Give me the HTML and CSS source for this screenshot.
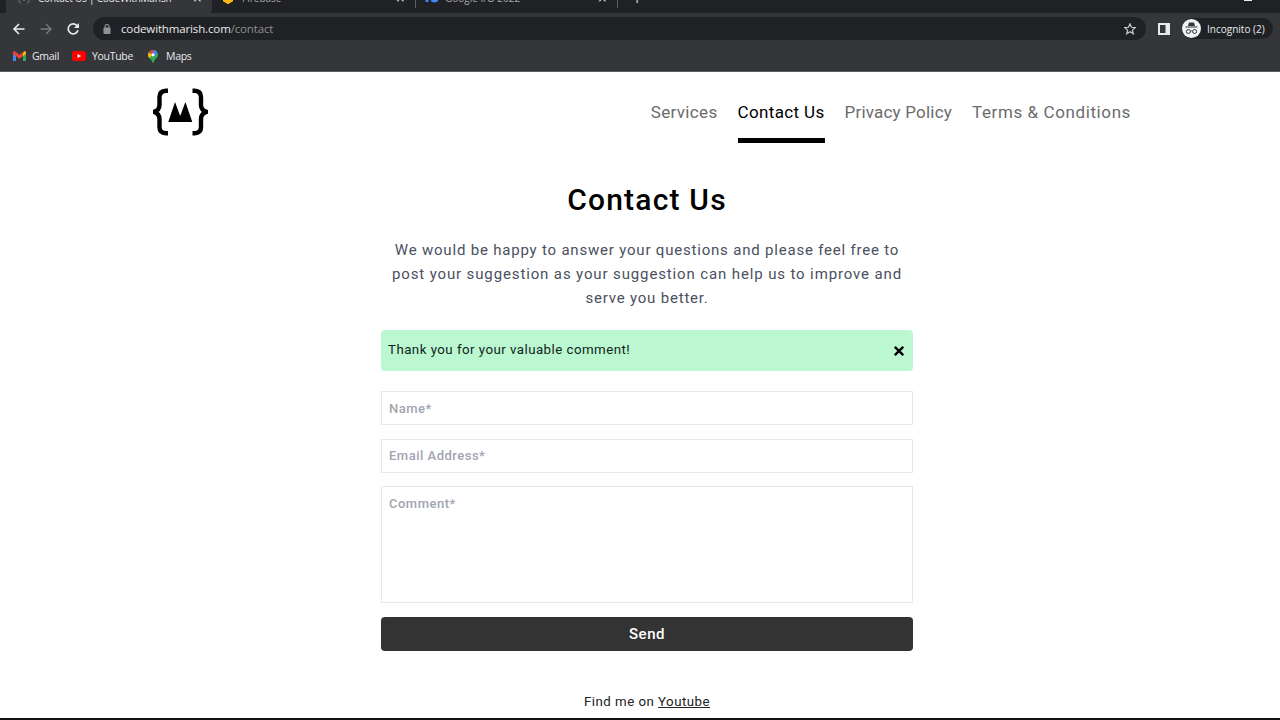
FILE: index.html
```html
<!DOCTYPE html>
<html lang="en">

<head>
    <meta charset="UTF-8">
    <meta name="viewport" content="width=device-width, initial-scale=1.0">
    <title>Contact Us | CodeWithMarish</title>
    <link rel="stylesheet" href="styles.css">
</head>

<body>
    <div class="browser">
        <!-- tabs -->
        <div class="tabs">
            <div class="tab active">
                <svg class="tab-icon" width="12" height="12" viewBox="0 0 12 12" fill="none" stroke="#77797d">
                    <path d="M3 1Q1 1 1 3V5L0 6L1 7V9Q1 11 3 11M9 1Q11 1 11 3V5L12 6L11 7V9Q11 11 9 11M4 8H8" />
                </svg>
                <span class="tab-title">Contact Us | CodeWithMarish</span>
                <span class="tab-close">×</span>
            </div>
            <div class="tab firebase">
                <svg class="tab-icon" width="12" height="12" viewBox="0 0 12 12">
                    <path d="M1 1H11V9L6 12L1 9Z" fill="#ffca28" />
                    <path d="M1 9L6 5L11 9L6 12Z" fill="#ffb612" />
                </svg>
                <span class="tab-title">Firebase</span>
                <span class="tab-close">×</span>
            </div>
            <div class="tab google">
                <svg class="tab-icon" width="15" height="12" viewBox="0 0 15 12" fill="none" stroke="#4285f4" stroke-width="3">
                    <path d="M3 2V10" />
                    <circle cx="10.500" cy="6.500" r="2.500" />
                </svg>
                <span class="tab-title">Google I/O 2022</span>
                <span class="tab-close">×</span>
            </div>
            <span class="new-tab">+</span>
            <span class="minimize"></span>
        </div>

        <!-- address bar -->
        <div class="toolbar">
            <svg class="nav-icon" width="14" height="14" viewBox="0 0 14 14" fill="none" stroke="#e8eaed" stroke-width="1.600">
                <path d="M12.500 7H2M7 2L2 7L7 12" />
            </svg>
            <svg class="nav-icon" width="14" height="14" viewBox="0 0 14 14" fill="none" stroke="#77797d" stroke-width="1.400">
                <path d="M1.500 7H12M7 2L12 7L7 12" />
            </svg>
            <svg class="nav-icon" width="14" height="14" viewBox="0 0 14 14" fill="none" stroke="#e8eaed" stroke-width="1.700">
                <path d="M11.300 4A5 5 0 1 0 12 8.300" />
                <path d="M13 1V6H8Z" fill="#e8eaed" stroke="none" />
            </svg>
            <div class="address">
                <svg width="8" height="10" viewBox="0 0 8 10">
                    <path d="M2 4V2.500A2 2 0 0 1 6 2.500V4" fill="none" stroke="#8f9194" stroke-width="1.100" />
                    <rect x="0.500" y="3.500" width="7" height="6.500" rx="0.800" fill="#8f9194" />
                </svg>
                <span class="url">codewithmarish.com<span>/contact</span></span>
                <svg class="star" width="12" height="12" viewBox="0 0 12 12" fill="none" stroke="#c8cacd" stroke-width="1.200">
                    <path d="M6 0.900L7.500 4.300L11.300 4.600L8.400 7.100L9.300 10.800L6 8.800L2.700 10.800L3.600 7.100L0.700 4.600L4.500 4.300Z" />
                </svg>
            </div>
            <svg class="panel-icon" width="12" height="12" viewBox="0 0 12 12">
                <path d="M0 0H12V12H0ZM2 2V10H7.500V2Z" fill="#e8eaed" fill-rule="evenodd" />
            </svg>
            <div class="incognito">
                <svg width="19" height="19" viewBox="0 0 19 19">
                    <circle cx="9.500" cy="9.500" r="9.500" fill="#f1f3f4" />
                    <path d="M6 7L7 3.500H12L13 7ZM3.500 7.500H15.500V8.500H3.500Z" fill="#35363a" />
                    <g fill="none" stroke="#35363a">
                        <circle cx="6.400" cy="12.500" r="2" />
                        <circle cx="12.600" cy="12.500" r="2" />
                        <path d="M8.400 12.300Q9.500 11.300 10.600 12.300" />
                    </g>
                </svg>
                <span>Incognito (2)</span>
            </div>
        </div>

        <!-- bookmarks -->
        <div class="bookmarks">
            <span class="bookmark gmail">
                <svg width="13" height="10" viewBox="0 0 13 10">
                    <path d="M0 2V10H3V4Z" fill="#4285f4" />
                    <path d="M10 4V10H13V2Z" fill="#34a853" />
                    <path d="M10 1.500L11.500 0L13 1V3L10 5Z" fill="#fbbc04" />
                    <path d="M0 3V1L1.500 0L6.500 3.800L10 1.200V5L6.500 7.700Z" fill="#ea4335" />
                </svg>
                Gmail
            </span>
            <span class="bookmark youtube">
                <svg width="14" height="10" viewBox="0 0 14 10">
                    <rect width="14" height="10" rx="2.500" fill="#f00" />
                    <path d="M5.500 3L9.300 5L5.500 7Z" fill="#fff" />
                </svg>
                YouTube
            </span>
            <span class="bookmark maps">
                <svg width="10" height="13" viewBox="0 0 10 13">
                    <path d="M5 0A5 5 0 0 1 10 5C10 8 6.500 9 5.800 12Q5 14 4.200 12C3.500 9 0 8 0 5A5 5 0 0 1 5 0Z" fill="#34a853" />
                    <path d="M1 2.200L4 5L1.300 8.300Q0 6.800 0 5Q0 3.300 1 2.200Z" fill="#fbbc04" />
                    <path d="M1 2.200Q2.500 0 5 0L6.500 0.300L3.500 4.500Z" fill="#ea4335" />
                    <path d="M6 0.100Q8.600 0.600 9.600 3L6.500 6.300L4 4Z" fill="#4285f4" />
                    <circle cx="5" cy="4.800" r="1.600" fill="#fff" />
                </svg>
                Maps
            </span>
        </div>
    </div>

    <div class="page">
        <header class="header">
            <a class="logo" href="#">
                <svg width="55" height="48" viewBox="0 0 55 48">
                    <g fill="none" stroke="#000" stroke-width="4.400">
                        <path d="M15 2.700H13Q6.500 3 6.500 9V17Q6.500 22 1 23.800Q6.500 25.500 6.500 31V39Q6.500 45 13 45.200H15" />
                        <path d="M39.500 2.700H41.500Q48 3 48 9V17Q48 22 53.500 23.800Q48 25.500 48 31V39Q48 45 41.500 45.200H39.500" />
                    </g>
                    <path d="M15.300 34L22 14L27.200 28L32.400 14L39.300 34Z" fill="#000" />
                </svg>
            </a>
            <nav class="menu">
                <a href="#">Services</a>
                <a class="current" href="#">Contact Us</a>
                <a class="privacy" href="#">Privacy Policy</a>
                <a class="terms" href="#">Terms &amp; Conditions</a>
            </nav>
        </header>

        <main class="contact">
            <h1>Contact Us</h1>
            <p class="intro">We would be happy to answer your questions and please feel free to<br>
                <span class="intro-mid">post your suggestion as your suggestion can help us to improve and</span><br>
                serve you better.</p>
            <div class="alert">
                <span>Thank you for your valuable comment!</span>
                <svg width="10" height="10" viewBox="0 0 10 10" stroke="#000" stroke-width="2.300">
                    <path d="M0.800 0.800L9.200 9.200M9.200 0.800L0.800 9.200" />
                </svg>
            </div>
            <form class="form">
                <input type="text" placeholder="Name*">
                <input type="email" placeholder="Email Address*">
                <textarea placeholder="Comment*"></textarea>
                <button type="button">Send</button>
            </form>
            <p class="find">Find me on <a href="#">Youtube</a></p>
        </main>
    </div>
</body>

</html>
```

FILE: styles.css
```css
* {
    box-sizing: border-box;
}

body {
    margin: 0;
    height: 720px;
    overflow: hidden;
    display: flex;
    flex-direction: column;
    background-color: #fff;
    font-family: Roboto, sans-serif;
}

a {
    color: inherit;
    text-decoration: none;
}

svg {
    display: block;
    flex-shrink: 0;
}

/* browser */
.browser {
    height: 72px;
    flex-shrink: 0;
    background-color: #35363a;
    border-bottom: 1px solid #5c5d60;
    font-family: "Open Sans", sans-serif;
    color: #e8eaed;
}

.tabs {
    display: flex;
    height: 13px;
    padding-left: 6px;
    background-color: #202124;
}

.tab {
    display: flex;
    height: 8px;
    padding-right: 10px;
    font-size: 10px;
    line-height: 14px;
    color: #a5a8ac;
}

.tab.active {
    width: 206px;
    height: 13px;
    padding-left: 12px;
    border-radius: 0 0 4px 0;
    background-color: #35363a;
    color: #e8eaed;
}

.active .tab-title {
    letter-spacing: -0.2px;
}

.firebase {
    width: 204px;
    padding-left: 10px;
    border-right: 1px solid #5f6165;
}

.google {
    width: 202px;
    padding-left: 8px;
    border-right: 1px solid #5f6165;
}

.tab-icon {
    margin-top: -8px;
    margin-right: 8px;
}

.google .tab-icon {
    margin-right: 6px;
}

.tab-title {
    margin-top: -9px;
    white-space: nowrap;
}

.tab-close {
    margin-top: -9px;
    margin-left: auto;
    font-size: 16px;
    color: #d5d7da;
}

.new-tab {
    margin: -11px 0 0 14px;
    font-size: 18px;
    line-height: 18px;
    color: #c8cacd;
}

.minimize {
    width: 8px;
    height: 1px;
    margin-left: auto;
    margin-right: 28px;
    background-color: #e8eaed;
}

.toolbar {
    display: flex;
    align-items: center;
    height: 31px;
    padding: 0 7px 0 12px;
}

.nav-icon {
    margin-right: 13px;
}

.address {
    display: flex;
    align-items: center;
    flex: 1;
    height: 23px;
    padding: 0 10px 0 10px;
    border-radius: 12px;
    background-color: #202124;
}

.url {
    margin-left: 10px;
    font-size: 11.5px;
    letter-spacing: -0.14px;
}

.url span {
    color: #8c8f93;
}

.star {
    margin-left: auto;
}

.panel-icon {
    margin: 0 12px;
}

.incognito {
    display: flex;
    align-items: center;
    gap: 6px;
    width: 91px;
    height: 21px;
    border-radius: 11px;
    background-color: #202124;
    font-size: 10px;
    white-space: nowrap;
}

.bookmarks {
    display: flex;
    align-items: center;
    height: 24px;
    padding-left: 13px;
    font-size: 10.5px;
    letter-spacing: -0.3px;
}

.bookmark {
    display: flex;
    align-items: center;
    gap: 6px;
}

.gmail {
    width: 59px;
}

.youtube {
    width: 76px;
}

.maps {
    gap: 8px;
}

/* page */
.page {
    flex: 1;
    border-bottom: 2px solid #111;
}

.header {
    display: flex;
    justify-content: space-between;
    height: 72px;
    padding: 16px 149px 0 153px;
}

.menu {
    display: flex;
    gap: 20px;
    height: 55px;
    font-size: 17px;
    line-height: 48px;
    letter-spacing: 0.35px;
    color: #6b6b6b;
}

.menu a {
    white-space: nowrap;
}

.menu .current {
    color: #000;
    border-bottom: 5px solid #000;
}

.menu .privacy {
    letter-spacing: 0.2px;
}

.menu .terms {
    letter-spacing: 0.6px;
}

.contact {
    width: 532px;
    margin: 0 auto;
    position: relative;
    left: 7px;
    text-align: center;
}

.contact h1 {
    margin: 37px 0 0;
    font-size: 30px;
    font-weight: 500;
    line-height: 38px;
    letter-spacing: 1.2px;
}

.intro {
    margin: 19px 0 20px;
    font-size: 15px;
    line-height: 24px;
    letter-spacing: 0.8px;
    color: #4a5060;
    white-space: nowrap;
}

.intro-mid {
    letter-spacing: 0.87px;
}

.alert {
    display: flex;
    align-items: center;
    justify-content: space-between;
    height: 41px;
    padding: 0 9px 0 7px;
    border-radius: 4px;
    background-color: #bbf7d0;
    font-size: 13.3px;
    letter-spacing: 0.46px;
    color: #10251a;
}

.alert span {
    padding-bottom: 2px;
}

.form {
    display: flex;
    flex-direction: column;
    gap: 13.7px;
    margin-top: 20px;
}

.form input,
.form textarea {
    height: 34px;
    margin: 0;
    padding: 0 7px;
    border: 1px solid #e8e8ea;
    font: 500 13px Roboto, sans-serif;
    letter-spacing: 0.5px;
    resize: none;
}

.form textarea {
    height: 117px;
    padding-top: 9px;
}

.form ::placeholder {
    color: #a0a5b0;
}

.form button {
    height: 34px;
    border: none;
    border-radius: 4px;
    background-color: #333;
    color: #fff;
    font: 500 15px Roboto, sans-serif;
    letter-spacing: 0.5px;
}

.find {
    margin: 41px 0 0;
    font-size: 13.3px;
    line-height: 20px;
    letter-spacing: 0.46px;
    color: #222;
}

.find a {
    text-decoration: underline;
}
```
